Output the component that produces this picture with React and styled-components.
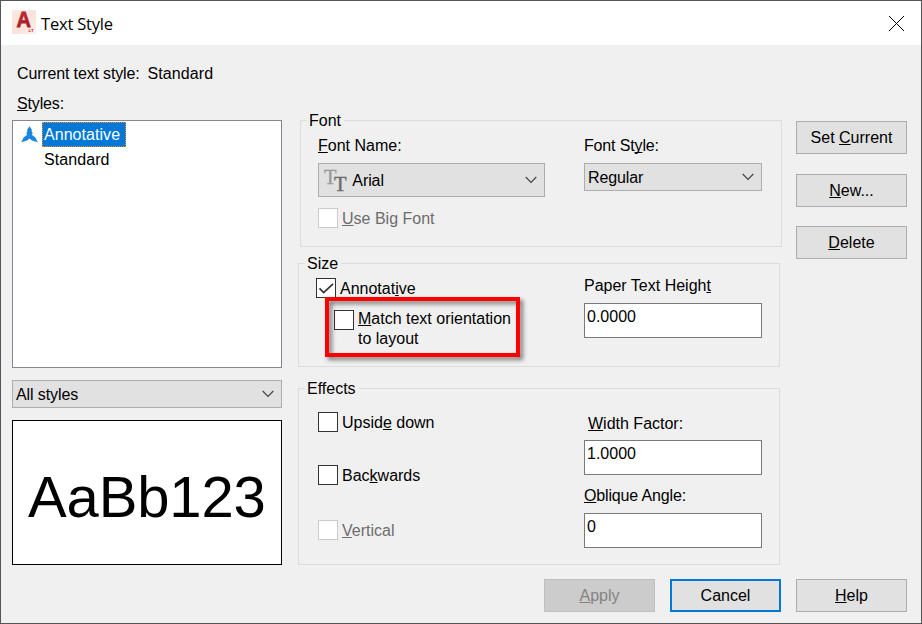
import styled, { createGlobalStyle, css } from 'styled-components';

const GlobalStyle = createGlobalStyle`
  *,
  *::after {
    box-sizing: border-box;
  }

  body {
    margin: 0;
    font-family: 'Liberation Sans', Arial, sans-serif;
    font-size: 16px;
    line-height: 20px;
    color: #000;
  }
`;

const Dialog = styled.div`
  width: 922px;
  height: 624px;
  display: flex;
  flex-direction: column;
  border: 1px solid #555;
  background: #f0f0f0;
  overflow: hidden;
  white-space: nowrap;
`;

const TitleBar = styled.header`
  height: 44px;
  flex-shrink: 0;
  display: flex;
  align-items: center;
  padding: 0 16px 0 11px;
  background: #fff;
`;

const AppTile = styled.span`
  display: flex;
  margin-bottom: 2px;
`;

const Title = styled.h1`
  flex: 1;
  margin: 1px 0 0 5px;
  font-family: 'Open Sans', 'Noto Sans', sans-serif;
  font-size: 16.5px;
  font-weight: 400;
  letter-spacing: -0.2px;
`;

const CloseButton = styled.button`
  display: flex;
  padding: 0;
  border: 0;
  background: none;
`;

const Content = styled.main`
  display: flex;
  align-items: flex-start;
  padding: 0 14px 0 11px;
  height: 520px;
`;

const StylesColumn = styled.section`
  width: 270px;
  padding-top: 19px;
  display: flex;
  flex-direction: column;
`;

const SettingsColumn = styled.section`
  width: 484px;
  margin-left: 16px;
  padding-top: 75px;
  display: flex;
  flex-direction: column;
`;

const ActionsColumn = styled.aside`
  width: 111px;
  margin-left: 14px;
  padding-top: 76px;
  display: flex;
  flex-direction: column;
`;

const Text = styled.div`
  margin-top: ${({ $top = 0 }) => $top}px;
  padding-left: ${({ $indent = 0 }) => $indent}px;
  letter-spacing: ${({ $tight }) => ($tight ? '-0.15px' : 'normal')};
`;

const CurrentStyle = styled.span`
  margin-left: 8px;
  letter-spacing: 0.08px;
`;

const Key = styled.span`
  text-decoration: underline;
  text-decoration-thickness: 1px;
  text-decoration-skip-ink: none;
  text-underline-offset: 1px;
`;

const StyleList = styled.ul`
  height: 248px;
  margin: 6px 0 0;
  padding: 1px 0 0 8px;
  list-style: none;
  border: 1px solid #828790;
  background: #fff;
`;

const StyleItem = styled.li`
  height: 25px;
  display: flex;
  align-items: center;
`;

const IconSlot = styled.span`
  width: 21px;
  display: flex;
`;

const StyleName = styled.span`
  height: 25px;
  padding: 2px 5px 0 1px;
  border: 1px solid transparent;
  letter-spacing: 0.08px;

  ${({ $selected }) =>
    $selected &&
    css`
      border: 1px dotted #ff8728;
      background: #0078d7;
      color: #fff;
      letter-spacing: 0.05px;
    `}
`;

const Select = styled.div`
  height: ${({ $height = 28 }) => $height}px;
  width: ${({ $width }) => ($width ? `${$width}px` : 'auto')};
  margin-top: ${({ $top = 7 }) => $top}px;
  padding: 0 7px 0 ${({ $pad = 3 }) => $pad}px;
  display: flex;
  align-items: center;
  border: 1px solid #adadad;
  background: #e1e1e1;
`;

const SelectValue = styled.span`
  flex: 1;
  padding-top: 2px;
  letter-spacing: -0.1px;
`;

const Preview = styled.div`
  height: 145px;
  margin-top: 12px;
  padding: 8px 0 0 15px;
  display: flex;
  align-items: center;
  border: 1px solid #000;
  background: #fff;
  font-size: 58px;
  line-height: 66px;
  letter-spacing: -0.15px;
`;

const Group = styled.div`
  width: 482px;
  height: ${({ $height }) => $height}px;
  margin-top: ${({ $top = 0 }) => $top}px;
  margin-left: ${({ $left = 0 }) => $left}px;
  border: 1px solid #dcdcdc;
`;

const Legend = styled.div`
  width: fit-content;
  margin: -10px 0 0 6px;
  padding: 0 3px 0 2px;
  background: #f0f0f0;
`;

const Columns = styled.div`
  display: grid;
  grid-template-columns: 1fr 178px;
  padding: 0 ${({ $right = 17 }) => $right}px 0 ${({ $left = 19 }) => $left}px;
`;

const Column = styled.div`
  display: flex;
  flex-direction: column;
`;

const CheckRow = styled.div`
  display: flex;
  gap: 4px;
  margin-top: ${({ $top = 0 }) => $top}px;
  color: ${({ $disabled }) => ($disabled ? '#6d6d6d' : '#000')};
`;

const CheckLabel = styled.span`
  padding-top: 1px;
`;

const Box = styled.span`
  width: 20px;
  height: 20px;
  margin-top: ${({ $top = 0 }) => $top}px;
  display: flex;
  border: 1px solid ${({ $disabled }) => ($disabled ? '#ccc' : '#333')};
  background: #fff;
`;

const Highlighted = styled.div`
  position: relative;
  width: 195px;
  padding-left: 18px;
  margin-top: 9px;

  &::after {
    content: '';
    position: absolute;
    left: 9px;
    top: -11px;
    width: 195px;
    height: 60px;
    border: 4px solid #fe0000;
    filter: drop-shadow(3px 3px 2px rgba(0, 0, 0, 0.5));
  }
`;

const Input = styled.div`
  height: 35px;
  margin-top: ${({ $top = 7 }) => $top}px;
  padding: 3px 2px 0;
  border: 1px solid #7a7a7a;
  background: #fff;
`;

const Button = styled.button`
  width: 111px;
  height: 33px;
  margin: ${({ $top = 0 }) => $top}px 0 0;
  padding: 0;
  border: 1px solid #adadad;
  background: #e1e1e1;
  font: inherit;
  color: #000;

  ${({ $primary }) =>
    $primary &&
    css`
      border: 2px solid #0078d7;
    `}

  &:disabled {
    border-color: #bfbfbf;
    background: #ccc;
    color: #838383;
  }
`;

const Footer = styled.footer`
  display: flex;
  justify-content: flex-end;
  gap: 15px;
  padding: 14px 14px 0 0;
`;

const AppIcon = () => (
  <svg width="24" height="24" viewBox="0 0 24 24" overflow="visible">
    <defs>
      <linearGradient id="tile" x1="0" y1="0" x2="1" y2="1">
        <stop offset="0" stopColor="#fbeae4" />
        <stop offset="0.5" stopColor="#f9e2d9" />
        <stop offset="1" stopColor="#fdf1ec" />
      </linearGradient>
      <linearGradient id="letter" x1="0" y1="0" x2="0.3" y2="1">
        <stop offset="0" stopColor="#d5333a" />
        <stop offset="0.5" stopColor="#b8232c" />
        <stop offset="1" stopColor="#8e1c20" />
      </linearGradient>
    </defs>
    <rect width="24" height="24" fill="url(#tile)" />
    <text
      x="4.6"
      y="17.4"
      fontFamily="Liberation Sans, sans-serif"
      fontSize="21.5"
      fontWeight="700"
      textLength="14.4"
      lengthAdjust="spacingAndGlyphs"
      fill="url(#letter)"
      stroke="#b3242c"
      strokeWidth="0.8"
    >
      A
    </text>
    <text x="16.6" y="22" fontFamily="Liberation Sans, sans-serif" fontSize="4.4" fontWeight="700" fill="#d8202a">
      LT
    </text>
  </svg>
);

const CloseIcon = () => (
  <svg width="17" height="17" viewBox="0 0 17 17" fill="none" stroke="#000" strokeWidth="1">
    <path d="M1 1l15 15M16 1L1 16" />
  </svg>
);

const AnnotativeIcon = () => (
  <svg width="17" height="17" viewBox="0 0 17 17" fill="#1a86e0">
    <path d="M8.5 0.3L10.7 3.6V5.6L11.7 7L10.8 8.8L14.4 11.4L16.8 16.2L10.9 14.6L8.5 12.4L6.1 14.6L0.2 16.2L2.6 11.4L6.2 8.8L5.3 7L6.3 5.6V3.6Z" />
  </svg>
);

const TrueTypeIcon = () => (
  <svg width="25" height="32" viewBox="-2 -5 25 32" fontFamily="Liberation Serif, serif" fontSize="20.5">
    <text x="-0.9" y="14.5" fill="#999" stroke="#999" strokeWidth="0.3">
      T
    </text>
    <text x="9.1" y="21.5" fill="#6b6b6b" stroke="#6b6b6b" strokeWidth="0.4">
      T
    </text>
  </svg>
);

const Chevron = () => (
  <svg width="12" height="8" viewBox="0 0 12 8" fill="none" stroke="#444" strokeWidth="1.2">
    <path d="M0.7 1l5.3 5.3L11.3 1" />
  </svg>
);

const CheckMark = () => (
  <svg width="18" height="18" viewBox="0 0 18 18" fill="none" stroke="#333" strokeWidth="1.7">
    <path d="M2.5 9.3l4.2 4.2L16 4.8" />
  </svg>
);

const CheckBox = ({ top, boxTop, disabled, checked, children }) => (
  <CheckRow $top={top} $disabled={disabled}>
    <Box $top={boxTop} $disabled={disabled}>
      {checked && <CheckMark />}
    </Box>
    <CheckLabel>{children}</CheckLabel>
  </CheckRow>
);

const App = () => {
  return (
    <Dialog>
      <GlobalStyle />
      <TitleBar>
        <AppTile>
          <AppIcon />
        </AppTile>
        <Title>Text Style</Title>
        <CloseButton aria-label="Close">
          <CloseIcon />
        </CloseButton>
      </TitleBar>

      <Content>
        <StylesColumn>
          <Text $indent={5} $tight>
            Current text style:<CurrentStyle>Standard</CurrentStyle>
          </Text>
          <Text $top={10} $indent={5} $tight>
            <Key>S</Key>tyles:
          </Text>
          <StyleList>
            <StyleItem>
              <IconSlot>
                <AnnotativeIcon />
              </IconSlot>
              <StyleName $selected>Annotative</StyleName>
            </StyleItem>
            <StyleItem>
              <IconSlot />
              <StyleName>Standard</StyleName>
            </StyleItem>
          </StyleList>
          <Select $top={12}>
            <SelectValue>All styles</SelectValue>
            <Chevron />
          </Select>
          <Preview>AaBb123</Preview>
        </StylesColumn>

        <SettingsColumn>
          <Group $height={127} $left={2}>
            <Legend>Font</Legend>
            <Columns $left={17} $right={19}>
              <Column>
                <Text $top={5}>
                  <Key>F</Key>ont Name:
                </Text>
                <Select $height={34} $width={227} $pad={4}>
                  <TrueTypeIcon />
                  <SelectValue>&nbsp;Arial</SelectValue>
                  <Chevron />
                </Select>
                <CheckBox top={11} disabled>
                  <Key>U</Key>se Big Font
                </CheckBox>
              </Column>
              <Column>
                <Text $top={5} $tight>
                  Font St<Key>y</Key>le:
                </Text>
                <Select>
                  <SelectValue>Regular</SelectValue>
                  <Chevron />
                </Select>
              </Column>
            </Columns>
          </Group>

          <Group $height={104} $top={16}>
            <Legend>Size</Legend>
            <Columns $left={17}>
              <Column>
                <CheckBox top={4} checked>
                  Annotat<Key>i</Key>ve
                </CheckBox>
                <Highlighted>
                  <CheckBox boxTop={2}>
                    <Key>M</Key>atch text orientation
                    <br />
                    to layout
                  </CheckBox>
                </Highlighted>
              </Column>
              <Column>
                <Text $top={2}>
                  Paper Text Heigh<Key>t</Key>
                </Text>
                <Input>0.0000</Input>
              </Column>
            </Columns>
          </Group>

          <Group $height={177} $top={21}>
            <Legend>Effects</Legend>
            <Columns>
              <Column>
                <CheckBox top={13}>
                  Upsid<Key>e</Key> down
                </CheckBox>
                <CheckBox top={32}>
                  Bac<Key>k</Key>wards
                </CheckBox>
                <CheckBox top={34} disabled>
                  <Key>V</Key>ertical
                </CheckBox>
              </Column>
              <Column>
                <Text $top={15} $indent={4}>
                  <Key>W</Key>idth Factor:
                </Text>
                <Input $top={6}>1.0000</Input>
                <Text $top={11} $tight>
                  <Key>O</Key>blique Angle:
                </Text>
                <Input>0</Input>
              </Column>
            </Columns>
          </Group>
        </SettingsColumn>

        <ActionsColumn>
          <Button>
            Set <Key>C</Key>urrent
          </Button>
          <Button $top={20}>
            <Key>N</Key>ew...
          </Button>
          <Button $top={19}>
            <Key>D</Key>elete
          </Button>
        </ActionsColumn>
      </Content>

      <Footer>
        <Button disabled>
          <Key>A</Key>pply
        </Button>
        <Button $primary>Cancel</Button>
        <Button>
          <Key>H</Key>elp
        </Button>
      </Footer>
    </Dialog>
  );
};

export default App;
